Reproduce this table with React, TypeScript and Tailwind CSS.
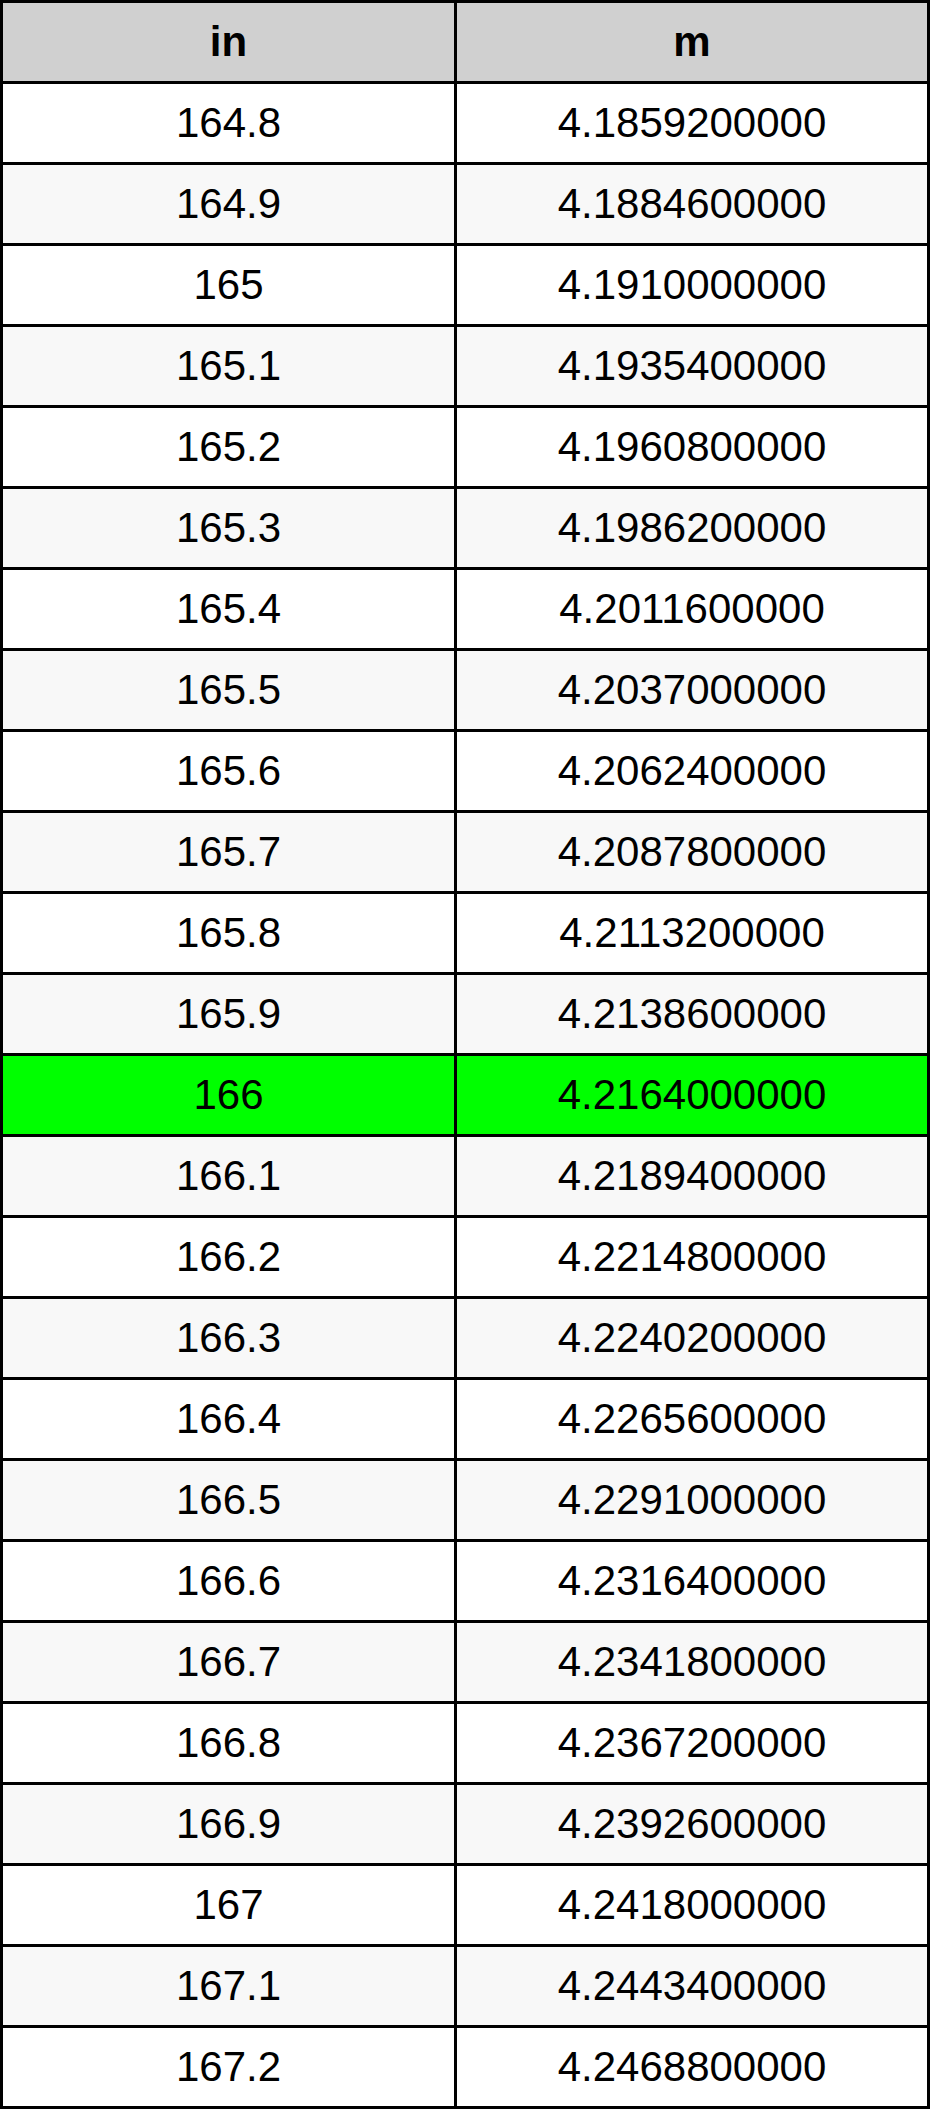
const rows: [string, string][] = [
  ["164.8", "4.1859200000"],
  ["164.9", "4.1884600000"],
  ["165", "4.1910000000"],
  ["165.1", "4.1935400000"],
  ["165.2", "4.1960800000"],
  ["165.3", "4.1986200000"],
  ["165.4", "4.2011600000"],
  ["165.5", "4.2037000000"],
  ["165.6", "4.2062400000"],
  ["165.7", "4.2087800000"],
  ["165.8", "4.2113200000"],
  ["165.9", "4.2138600000"],
  ["166", "4.2164000000"],
  ["166.1", "4.2189400000"],
  ["166.2", "4.2214800000"],
  ["166.3", "4.2240200000"],
  ["166.4", "4.2265600000"],
  ["166.5", "4.2291000000"],
  ["166.6", "4.2316400000"],
  ["166.7", "4.2341800000"],
  ["166.8", "4.2367200000"],
  ["166.9", "4.2392600000"],
  ["167", "4.2418000000"],
  ["167.1", "4.2443400000"],
  ["167.2", "4.2468800000"],
];

const Cell = ({ text, bg, bold }: { text: string; bg: string; bold?: boolean }) => (
  <div className={`${bg} h-[78px] flex items-center justify-center text-[42px] text-black ${bold ? "font-bold" : ""}`}>
    {text}
  </div>
);

export default function App() {
  return (
    <div className="w-[930px] bg-white pb-[6px] font-['Liberation_Sans',Arial,sans-serif]">
      <div className="grid grid-cols-[451px_470px] gap-[3px] bg-black p-[3px] leading-none">
        <Cell text="in" bg="bg-[#d0d0d0]" bold />
        <Cell text="m" bg="bg-[#d0d0d0]" bold />
        {rows.map(([a, b], i) => {
          const bg = a === "166" ? "bg-[#00ff00]" : i % 2 === 1 ? "bg-[#f8f8f8]" : "bg-white";
          return [
            <Cell key={a + "-in"} text={a} bg={bg} />,
            <Cell key={a + "-m"} text={b} bg={bg} />,
          ];
        })}
      </div>
    </div>
  );
}
